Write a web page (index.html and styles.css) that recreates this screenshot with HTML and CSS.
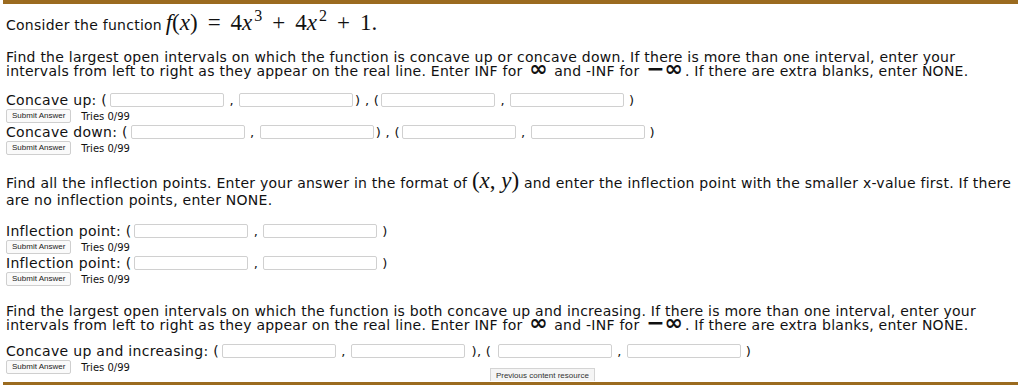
FILE: index.html
```html
<!DOCTYPE html>
<html>
<head>
<meta charset="utf-8">
<link rel="stylesheet" href="styles.css">
</head>
<body>
<div class="bar top"></div>
<div class="content">
  <p class="intro">Consider the function <span class="math eq"><i>f</i>(<i>x</i>)<span class="op">=</span>4<i>x</i><sup>3</sup><span class="op">+</span>4<i>x</i><sup>2</sup><span class="op">+</span>1.</span></p>

  <p class="para p1">Find the largest open intervals on which the function is concave up or concave down. If there is more than one interval, enter your intervals from left to right as they appear on the real line. Enter INF for <span class="inf">∞</span> and -INF for <span class="inf">−∞</span>. If there are extra blanks, enter NONE.</p>

  <div class="answer first">
    <div class="row"><span class="lbl">Concave up: (</span><span class="box"></span><span class="sep">,</span><span class="box"></span><span class="sep mid">) , (</span><span class="box"></span><span class="sep">,</span><span class="box"></span><span class="sep">)</span></div>
    <div class="sub"><span class="btn">Submit Answer</span><span class="tries">Tries 0/99</span></div>
  </div>
  <div class="answer">
    <div class="row"><span class="lbl">Concave down: (</span><span class="box"></span><span class="sep">,</span><span class="box"></span><span class="sep mid">) , (</span><span class="box"></span><span class="sep">,</span><span class="box"></span><span class="sep">)</span></div>
    <div class="sub"><span class="btn">Submit Answer</span><span class="tries">Tries 0/99</span></div>
  </div>

  <p class="para p2">Find all the inflection points. Enter your answer in the format of <span class="math pt">(<i>x</i>, <i>y</i>)</span> and enter the inflection point with the smaller x-value first. If there are no inflection points, enter NONE.</p>

  <div class="answer first">
    <div class="row"><span class="lbl">Inflection point: (</span><span class="box"></span><span class="sep">,</span><span class="box"></span><span class="sep">)</span></div>
    <div class="sub"><span class="btn">Submit Answer</span><span class="tries">Tries 0/99</span></div>
  </div>
  <div class="answer">
    <div class="row"><span class="lbl">Inflection point: (</span><span class="box"></span><span class="sep">,</span><span class="box"></span><span class="sep">)</span></div>
    <div class="sub"><span class="btn">Submit Answer</span><span class="tries">Tries 0/99</span></div>
  </div>

  <p class="para p3">Find the largest open intervals on which the function is both concave up and increasing. If there is more than one interval, enter your intervals from left to right as they appear on the real line. Enter INF for <span class="inf">∞</span> and -INF for <span class="inf">−∞</span>. If there are extra blanks, enter NONE.</p>

  <div class="answer first last">
    <div class="row"><span class="lbl">Concave up and increasing: (</span><span class="box"></span><span class="sep">,</span><span class="box"></span><span class="sep wide">), (</span><span class="box"></span><span class="sep">,</span><span class="box"></span><span class="sep">)</span></div>
    <div class="sub"><span class="btn">Submit Answer</span><span class="tries">Tries 0/99</span><span class="prev">Previous content resource</span></div>
  </div>
</div>
<div class="bar bottom"></div>
</body>
</html>
```

FILE: styles.css
```css
html, body {
  margin: 0;
  padding: 0;
  background: #fff;
}
body {
  font-family: "DejaVu Sans", Verdana, sans-serif;
  color: #111;
  width: 1024px;
  height: 385px;
  overflow: hidden;
  display: flex;
  flex-direction: column;
}
.bar {
  flex: none;
  background: #9b6b1f;
  margin: 0 6px 0 3px;
}
.top { height: 4px; }
.bottom { height: 3px; }
.content {
  padding: 0 0 0 6px;
  flex: 1;
}
.intro {
  margin: 6px 0 0 0;
  font-size: 14px;
  letter-spacing: 0.25px;
  line-height: 26px;
  white-space: nowrap;
}
.math {
  font-family: "Liberation Serif", "DejaVu Serif", serif;
  font-size: 23px;
  letter-spacing: 0;
}
.math.eq { margin-left: -1px; }
.math i { font-style: italic; }
.math sup { font-size: 16px; vertical-align: 9px; line-height: 0; margin-left: 2px; }
.op { margin: 0 10px; }
.para {
  font-size: 14px;
  letter-spacing: 0.25px;
  line-height: 14px;
  margin: 12px 0 0 0;
  max-width: 1000px;
}
.inf {
  font-family: "DejaVu Sans", sans-serif;
  font-weight: bold;
  font-size: 22px;
  letter-spacing: 0;
  margin: 0 2px;
  line-height: 10px;
}
.answer { margin-top: 0; }
.answer.first { margin-top: 14px; }
.row {
  display: flex;
  align-items: center;
  font-size: 14px;
  letter-spacing: 0.3px;
  height: 16px;
}
.lbl { margin-right: 3px; }
.box {
  display: inline-block;
  width: 112px;
  height: 12px;
  border: 1px solid #d0d0d0;
  border-radius: 2px;
  background: #fff;
}
.sep {
  display: inline-block;
  width: 15px;
  text-align: center;
  font-size: 13px;
}
.sep.mid { width: 28px; }
.sep.wide { width: 33px; }
.sub {
  display: flex;
  align-items: center;
  height: 16px;
}
.btn {
  display: inline-block;
  font-family: "Liberation Sans", Arial, sans-serif;
  font-size: 8px;
  border: 1px solid #cfcfcf;
  border-radius: 2px;
  padding: 1px 5px;
  color: #222;
  background: #fafafa;
  line-height: 10px;
}
.tries {
  font-size: 10px;
  margin-left: 10px;
}
.prev {
  align-self: flex-start;
  font-family: "Liberation Sans", Arial, sans-serif;
  font-size: 8px;
  line-height: 9px;
  border: 1px solid #d4d4d4;
  border-bottom: none;
  padding: 2px 5px 1px;
  margin-left: 360px;
  margin-top: 9px;
  background: #f5f5f5;
  color: #333;
}
.p2 { line-height: 17px; margin-top: 19px; max-width: none; }
.p2 .math { line-height: 10px; }
.p3 { margin-top: 17px; }
.answer.last { margin-top: 11px; }
.bottom { margin-top: auto; }
```
